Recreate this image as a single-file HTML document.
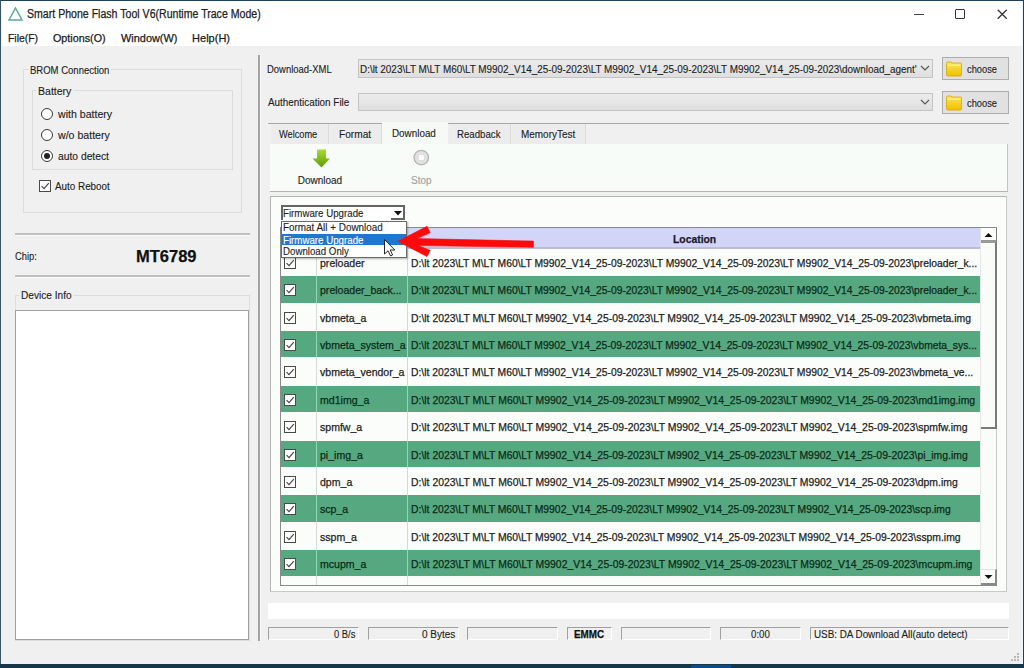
<!DOCTYPE html>
<html><head><meta charset="utf-8">
<style>
*{margin:0;padding:0;box-sizing:border-box}
html,body{width:1024px;height:668px;overflow:hidden;background:#f0f0f0}
body{position:relative;font-family:"Liberation Sans",sans-serif;font-size:12px;color:#1a1a1a}
.a{position:absolute}
.t{position:absolute;white-space:nowrap;transform-origin:0 0;-webkit-text-stroke:0.25px currentColor}
.gb{position:absolute;border:1px solid #dcdcdc}
.radio{position:absolute;width:12px;height:12px;border:1px solid #3a3a3a;border-radius:50%;background:#fff}
.radio .dot{position:absolute;left:2px;top:2px;width:6px;height:6px;border-radius:50%;background:#222}
.chk{position:absolute;width:12px;height:12px;border:1px solid #4a4a4a;background:#fff}
.chk svg{position:absolute;left:0;top:0}
.sep{position:absolute;height:3px;background:#c0c0c0;border-bottom:1px solid #fafafa}
.combo{position:absolute;background:linear-gradient(#ebebeb,#dfdfdf);border:1px solid #c4c4c4}
.btn{position:absolute;background:#e1e1e1;border:1px solid #adadad}
.folder{position:absolute;width:16px;height:13px;background:linear-gradient(#ffe866,#f2bc00);border-radius:1px}
.folder:before{content:"";position:absolute;left:0;top:-2px;width:7px;height:3px;background:#f7d040;border-radius:1px 1px 0 0}
.tab{position:absolute;background:#ececec;border-right:1px solid #dadada}
.sb{position:absolute;height:13px;border-top:1px solid #a0a0a0;border-left:1px solid #a0a0a0;border-bottom:1px solid #fff;border-right:1px solid #fff}
</style></head><body>


<div class="a" style="left:0;top:0;width:1024px;height:46px;background:#fff"></div>
<div class="a" style="left:0;top:0;width:1024px;height:1px;background:#1f4058"></div>
<div class="a" style="left:1px;top:1px;width:1px;height:663px;background:#e6f6fa"></div>
<div class="a" style="left:0;top:0;width:1px;height:668px;background:#345464"></div>
<div class="a" style="left:1022px;top:1px;width:1px;height:663px;background:#eef6fc"></div>
<div class="a" style="left:1023px;top:0;width:1px;height:668px;background:#2a3e52"></div>
<div class="a" style="left:0;top:664px;width:1024px;height:4px;background:#16364c"></div>
<div class="a" style="left:691px;top:665px;width:40px;height:3px;background:#0c4c88"></div>
<svg class="a" style="left:7px;top:6px" width="17" height="16" viewBox="0 0 17 16"><path d="M8.5 2 L15 14 L2 14 Z" fill="none" stroke="#5aa8a0" stroke-width="1.5" stroke-linejoin="miter"/></svg>
<span class="t" style="left:26.92px;top:8.00px;font-size:12px;line-height:12px;color:#222;transform:scaleX(0.8811);">Smart Phone Flash Tool V6(Runtime Trace Mode)</span>
<div class="a" style="left:914px;top:13.6px;width:10px;height:1.4px;background:#444"></div>
<div class="a" style="left:955px;top:9px;width:10px;height:9.5px;border:1.3px solid #333;border-radius:1px"></div>
<svg class="a" style="left:997px;top:8.5px" width="10.5" height="10.5" viewBox="0 0 10.5 10.5"><path d="M0.7 0.7 L9.8 9.8 M9.8 0.7 L0.7 9.8" stroke="#333" stroke-width="1.3"/></svg>
<span class="t" style="left:7.86px;top:33.00px;font-size:11px;line-height:11px;color:#1a1a1a;transform:scaleX(0.9433);">File(F)</span><span class="t" style="left:52.70px;top:33.00px;font-size:11px;line-height:11px;color:#1a1a1a;transform:scaleX(0.9778);">Options(O)</span><span class="t" style="left:120.70px;top:33.00px;font-size:11px;line-height:11px;color:#1a1a1a;transform:scaleX(0.9930);">Window(W)</span><span class="t" style="left:192.10px;top:33.00px;font-size:11px;line-height:11px;color:#1a1a1a;">Help(H)</span>

<div class="gb" style="left:23px;top:69px;width:219px;height:144px"></div>
<span class="t" style="left:29.75px;top:66.00px;font-size:10px;line-height:10px;color:#1e1e1e;-webkit-text-stroke:0.12px currentColor;transform:scaleX(0.9537);background:#f0f0f0;padding:0 2px;margin-left:-2px">BROM Connection</span>
<div class="gb" style="left:32px;top:90px;width:201px;height:80px"></div>
<span class="t" style="left:38.45px;top:87.00px;font-size:10px;line-height:10px;color:#1e1e1e;-webkit-text-stroke:0.12px currentColor;transform:scaleX(1.0484);background:#f0f0f0;padding:0 2px;margin-left:-2px">Battery</span>
<div class="radio" style="left:41px;top:107.5px"></div><span class="t" style="left:57.80px;top:110.00px;font-size:10px;line-height:10px;color:#1e1e1e;-webkit-text-stroke:0.12px currentColor;transform:scaleX(1.0588);">with battery</span>
<div class="radio" style="left:41px;top:128.6px"></div><span class="t" style="left:57.80px;top:131.00px;font-size:10px;line-height:10px;color:#1e1e1e;-webkit-text-stroke:0.12px currentColor;transform:scaleX(1.0592);">w/o battery</span>
<div class="radio" style="left:41px;top:149.5px"><div class="dot"></div></div><span class="t" style="left:57.80px;top:152.00px;font-size:10px;line-height:10px;color:#1e1e1e;-webkit-text-stroke:0.12px currentColor;transform:scaleX(1.0300);">auto detect</span>
<div class="chk" style="left:39px;top:179.5px"><svg width="10" height="10" viewBox="0 0 10 10"><path d="M1.6 5.2 L4 7.6 L8.8 2.2" fill="none" stroke="#444" stroke-width="1.15"/></svg></div><span class="t" style="left:54.90px;top:182.00px;font-size:10px;line-height:10px;color:#1e1e1e;-webkit-text-stroke:0.12px currentColor;transform:scaleX(0.9857);">Auto Reboot</span>

<div class="sep" style="left:15px;top:233px;width:235px"></div>
<span class="t" style="left:14.50px;top:252.00px;font-size:10px;line-height:10px;color:#1e1e1e;-webkit-text-stroke:0.12px currentColor;transform:scaleX(0.9348);">Chip:</span>
<span class="t" style="left:136.17px;top:249.00px;font-size:16px;line-height:16px;color:#111;font-weight:700;transform:scaleX(1.0316);">MT6789</span>
<div class="sep" style="left:15px;top:275px;width:235px"></div>
<div class="gb" style="left:15px;top:295px;width:235px;height:346px"></div>
<span class="t" style="left:21.39px;top:291.00px;font-size:10px;line-height:10px;color:#1e1e1e;-webkit-text-stroke:0.12px currentColor;transform:scaleX(1.0122);background:#f0f0f0;padding:0 2px;margin-left:-2px">Device Info</span>
<div class="a" style="left:15px;top:310px;width:234px;height:330px;background:#fff;border:1px solid #a0a0a0"></div>
<div class="a" style="left:258px;top:55px;width:3px;height:586px;background:#a4a4a4;border-right:1px solid #fafafa"></div>

<span class="t" style="left:266.95px;top:65.00px;font-size:10px;line-height:10px;color:#1e1e1e;-webkit-text-stroke:0.12px currentColor;transform:scaleX(0.9463);">Download-XML</span>
<span class="t" style="left:267.90px;top:98.00px;font-size:10px;line-height:10px;color:#1e1e1e;-webkit-text-stroke:0.12px currentColor;transform:scaleX(0.9878);">Authentication File</span>
<div class="combo" style="left:358px;top:59px;width:575px;height:19px"></div>
<span class="t" style="left:360.01px;top:65.00px;font-size:10px;line-height:10px;color:#1e1e1e;-webkit-text-stroke:0.12px currentColor;transform:scaleX(0.9902);">D:\lt 2023\LT M\LT M60\LT M9902_V14_25-09-2023\LT M9902_V14_25-09-2023\LT M9902_V14_25-09-2023\download_agent'</span>
<svg class="a" style="left:920px;top:65px" width="10" height="6" viewBox="0 0 10 6"><path d="M1 1 L5 5 L9 1" fill="none" stroke="#555" stroke-width="1.1"/></svg>
<div class="combo" style="left:358px;top:93px;width:575px;height:18px"></div>
<svg class="a" style="left:920px;top:99px" width="10" height="6" viewBox="0 0 10 6"><path d="M1 1 L5 5 L9 1" fill="none" stroke="#555" stroke-width="1.1"/></svg>
<div class="btn" style="left:942px;top:57px;width:67px;height:23px"></div>
<svg class="a" style="left:945px;top:61px" width="18" height="16" viewBox="0 0 18 16"><defs><linearGradient id="gf1" x1="0" y1="0" x2="0" y2="1"><stop offset="0" stop-color="#fde65a"/><stop offset="1" stop-color="#f0c000"/></linearGradient></defs><path d="M1.5 2.2 Q1.5 1 2.7 1 H6 L7 2 H15.3 Q16.5 2 16.5 3.2 V13.8 Q16.5 15 15.3 15 H2.7 Q1.5 15 1.5 13.8 Z" fill="url(#gf1)" stroke="#d8ac10" stroke-width="0.9"/><path d="M2.5 4.2 H15.5" stroke="#fff59a" stroke-width="1.2"/></svg>
<span class="t" style="left:966.60px;top:65.00px;font-size:10px;line-height:10px;color:#1e1e1e;-webkit-text-stroke:0.12px currentColor;transform:scaleX(0.9281);">choose</span>
<div class="btn" style="left:942px;top:91px;width:67px;height:23px"></div>
<svg class="a" style="left:945px;top:95px" width="18" height="16" viewBox="0 0 18 16"><defs><linearGradient id="gf2" x1="0" y1="0" x2="0" y2="1"><stop offset="0" stop-color="#fde65a"/><stop offset="1" stop-color="#f0c000"/></linearGradient></defs><path d="M1.5 2.2 Q1.5 1 2.7 1 H6 L7 2 H15.3 Q16.5 2 16.5 3.2 V13.8 Q16.5 15 15.3 15 H2.7 Q1.5 15 1.5 13.8 Z" fill="url(#gf2)" stroke="#d8ac10" stroke-width="0.9"/><path d="M2.5 4.2 H15.5" stroke="#fff59a" stroke-width="1.2"/></svg>
<span class="t" style="left:966.60px;top:99.00px;font-size:10px;line-height:10px;color:#1e1e1e;-webkit-text-stroke:0.12px currentColor;transform:scaleX(0.9281);">choose</span>

<div class="a" style="left:268px;top:123px;width:741px;height:1px;background:#a8a8a8"></div>
<div class="tab" style="left:271px;top:124px;width:58px;height:20px"></div>
<span class="t" style="left:279.00px;top:130.00px;font-size:10px;line-height:10px;color:#1e1e1e;-webkit-text-stroke:0.12px currentColor;transform:scaleX(0.9214);">Welcome</span>
<div class="tab" style="left:330px;top:124px;width:52px;height:20px"></div>
<span class="t" style="left:338.78px;top:130.00px;font-size:10px;line-height:10px;color:#1e1e1e;-webkit-text-stroke:0.12px currentColor;transform:scaleX(1.0161);">Format</span>
<div class="a" style="left:382px;top:122px;width:66px;height:23px;background:#f6faf6"></div>
<span class="t" style="left:391.81px;top:129.00px;font-size:10px;line-height:10px;color:#1e1e1e;-webkit-text-stroke:0.12px currentColor;transform:scaleX(0.9860);">Download</span>
<div class="tab" style="left:449px;top:124px;width:62px;height:20px"></div>
<span class="t" style="left:456.83px;top:130.00px;font-size:10px;line-height:10px;color:#1e1e1e;-webkit-text-stroke:0.12px currentColor;transform:scaleX(0.9659);">Readback</span>
<div class="tab" style="left:512px;top:124px;width:74px;height:20px"></div>
<span class="t" style="left:521.41px;top:130.00px;font-size:10px;line-height:10px;color:#1e1e1e;-webkit-text-stroke:0.12px currentColor;transform:scaleX(0.9944);">MemoryTest</span>
<div class="a" style="left:270px;top:144px;width:738px;height:48px;background:#f8fcf8;border-right:1px solid #c4c4c4;border-bottom:1px solid #b4b4b4"></div>
<div class="a" style="left:270px;top:192px;width:738px;height:4px;background:#eef2ee"></div>
<svg class="a" style="left:311px;top:148px" width="20" height="21" viewBox="0 0 20 21">
<defs><linearGradient id="ga" x1="0" y1="0" x2="0" y2="1"><stop offset="0" stop-color="#a8dc30"/><stop offset="1" stop-color="#5e9c08"/></linearGradient></defs>
<path d="M6 1.5 H15 V10.5 H19 L10.5 19.5 L1.5 10.5 H6 Z" fill="url(#ga)"/></svg>
<span class="t" style="left:297.70px;top:176.00px;font-size:10px;line-height:10px;color:#1e1e1e;-webkit-text-stroke:0.12px currentColor;">Download</span>
<svg class="a" style="left:412px;top:148px" width="19" height="19" viewBox="0 0 19 19">
<circle cx="9.3" cy="10.2" r="7.4" fill="#d8dad8" opacity="0.5"/><circle cx="9.3" cy="9.5" r="7.2" fill="#e2e2e2" stroke="#b4b4b4" stroke-width="1.3"/><rect x="6.3" y="6.5" width="6" height="6" rx="1" fill="#fcfcfc" stroke="#d0d0d0" stroke-width="0.6"/></svg>
<span class="t" style="left:411.00px;top:176.00px;font-size:10px;line-height:10px;color:#a0a0a0;-webkit-text-stroke:0.12px currentColor;">Stop</span>

<div class="a" style="left:270px;top:196px;width:737px;height:396px;background:#fbfdfb;border:1px solid #b4b4b4;border-right-color:#c8c8c8;border-bottom-color:#c8c8c8"></div>
<div class="a" style="left:280px;top:227px;width:717px;height:359px;background:#fafdfa;border-left:1px solid #8a8a8a;border-top:1px solid #8a8a8a;border-bottom:1px solid #8a8a8a"></div>
<div class="a" style="left:281px;top:228px;width:699px;height:20px;background:#d3d5f8"></div>
<div class="a" style="left:281px;top:247px;width:699px;height:1.5px;background:#bcbcd8"></div>
<span class="t" style="left:672.90px;top:234.00px;font-size:11px;line-height:11px;color:#1a1a2a;font-weight:700;transform:scaleX(0.9422);">Location</span>
<div class="a" style="left:316px;top:248px;width:1px;height:337px;background:#d6dad6"></div>
<div class="a" style="left:407px;top:248px;width:1px;height:337px;background:#d6dad6"></div>

<div class="chk" style="left:284px;top:256.80px"><svg width="10" height="10" viewBox="0 0 10 10"><path d="M1.6 5.2 L4 7.6 L8.8 2.2" fill="none" stroke="#444" stroke-width="1.15"/></svg></div>
<span class="t" style="left:319.70px;top:258.00px;font-size:11px;line-height:11px;color:#222;transform:scaleX(0.9595);">preloader</span>
<span class="t" style="left:410.96px;top:258.00px;font-size:11px;line-height:11px;color:#222;transform:scaleX(0.9394);">D:\lt 2023\LT M\LT M60\LT M9902_V14_25-09-2023\LT M9902_V14_25-09-2023\LT M9902_V14_25-09-2023\preloader_k...</span>
<div class="a" style="left:281px;top:276.19px;width:699px;height:26.4px;background:#56a880"></div>
<div class="a" style="left:316px;top:276.19px;width:1px;height:26.4px;background:#92d6b2"></div>
<div class="a" style="left:407px;top:276.19px;width:1px;height:26.4px;background:#92d6b2"></div>
<div class="chk" style="left:284px;top:284.19px"><svg width="10" height="10" viewBox="0 0 10 10"><path d="M1.6 5.2 L4 7.6 L8.8 2.2" fill="none" stroke="#444" stroke-width="1.15"/></svg></div>
<span class="t" style="left:319.70px;top:285.00px;font-size:11px;line-height:11px;color:#0c2a18;transform:scaleX(0.9595);">preloader_back...</span>
<span class="t" style="left:410.96px;top:285.00px;font-size:11px;line-height:11px;color:#0c2a18;transform:scaleX(0.9394);">D:\lt 2023\LT M\LT M60\LT M9902_V14_25-09-2023\LT M9902_V14_25-09-2023\LT M9902_V14_25-09-2023\preloader_k...</span>
<div class="chk" style="left:284px;top:311.58px"><svg width="10" height="10" viewBox="0 0 10 10"><path d="M1.6 5.2 L4 7.6 L8.8 2.2" fill="none" stroke="#444" stroke-width="1.15"/></svg></div>
<span class="t" style="left:319.70px;top:313.00px;font-size:11px;line-height:11px;color:#222;transform:scaleX(0.9595);">vbmeta_a</span>
<span class="t" style="left:410.95px;top:313.00px;font-size:11px;line-height:11px;color:#222;transform:scaleX(0.9453);">D:\lt 2023\LT M\LT M60\LT M9902_V14_25-09-2023\LT M9902_V14_25-09-2023\LT M9902_V14_25-09-2023\vbmeta.img</span>
<div class="a" style="left:281px;top:330.97px;width:699px;height:26.4px;background:#56a880"></div>
<div class="a" style="left:316px;top:330.97px;width:1px;height:26.4px;background:#92d6b2"></div>
<div class="a" style="left:407px;top:330.97px;width:1px;height:26.4px;background:#92d6b2"></div>
<div class="chk" style="left:284px;top:338.97px"><svg width="10" height="10" viewBox="0 0 10 10"><path d="M1.6 5.2 L4 7.6 L8.8 2.2" fill="none" stroke="#444" stroke-width="1.15"/></svg></div>
<span class="t" style="left:319.70px;top:340.00px;font-size:11px;line-height:11px;color:#0c2a18;transform:scaleX(0.9595);">vbmeta_system_a</span>
<span class="t" style="left:410.96px;top:340.00px;font-size:11px;line-height:11px;color:#0c2a18;transform:scaleX(0.9379);">D:\lt 2023\LT M\LT M60\LT M9902_V14_25-09-2023\LT M9902_V14_25-09-2023\LT M9902_V14_25-09-2023\vbmeta_sys...</span>
<div class="chk" style="left:284px;top:366.36px"><svg width="10" height="10" viewBox="0 0 10 10"><path d="M1.6 5.2 L4 7.6 L8.8 2.2" fill="none" stroke="#444" stroke-width="1.15"/></svg></div>
<span class="t" style="left:319.70px;top:367.00px;font-size:11px;line-height:11px;color:#222;transform:scaleX(0.9595);">vbmeta_vendor_a</span>
<span class="t" style="left:410.96px;top:367.00px;font-size:11px;line-height:11px;color:#222;transform:scaleX(0.9394);">D:\lt 2023\LT M\LT M60\LT M9902_V14_25-09-2023\LT M9902_V14_25-09-2023\LT M9902_V14_25-09-2023\vbmeta_ve...</span>
<div class="a" style="left:281px;top:385.75px;width:699px;height:26.4px;background:#56a880"></div>
<div class="a" style="left:316px;top:385.75px;width:1px;height:26.4px;background:#92d6b2"></div>
<div class="a" style="left:407px;top:385.75px;width:1px;height:26.4px;background:#92d6b2"></div>
<div class="chk" style="left:284px;top:393.75px"><svg width="10" height="10" viewBox="0 0 10 10"><path d="M1.6 5.2 L4 7.6 L8.8 2.2" fill="none" stroke="#444" stroke-width="1.15"/></svg></div>
<span class="t" style="left:319.70px;top:395.00px;font-size:11px;line-height:11px;color:#0c2a18;transform:scaleX(0.9595);">md1img_a</span>
<span class="t" style="left:410.95px;top:395.00px;font-size:11px;line-height:11px;color:#0c2a18;transform:scaleX(0.9475);">D:\lt 2023\LT M\LT M60\LT M9902_V14_25-09-2023\LT M9902_V14_25-09-2023\LT M9902_V14_25-09-2023\md1img.img</span>
<div class="chk" style="left:284px;top:421.14px"><svg width="10" height="10" viewBox="0 0 10 10"><path d="M1.6 5.2 L4 7.6 L8.8 2.2" fill="none" stroke="#444" stroke-width="1.15"/></svg></div>
<span class="t" style="left:319.70px;top:422.00px;font-size:11px;line-height:11px;color:#222;transform:scaleX(0.9595);">spmfw_a</span>
<span class="t" style="left:410.95px;top:422.00px;font-size:11px;line-height:11px;color:#222;transform:scaleX(0.9473);">D:\lt 2023\LT M\LT M60\LT M9902_V14_25-09-2023\LT M9902_V14_25-09-2023\LT M9902_V14_25-09-2023\spmfw.img</span>
<div class="a" style="left:281px;top:440.53px;width:699px;height:26.4px;background:#56a880"></div>
<div class="a" style="left:316px;top:440.53px;width:1px;height:26.4px;background:#92d6b2"></div>
<div class="a" style="left:407px;top:440.53px;width:1px;height:26.4px;background:#92d6b2"></div>
<div class="chk" style="left:284px;top:448.53px"><svg width="10" height="10" viewBox="0 0 10 10"><path d="M1.6 5.2 L4 7.6 L8.8 2.2" fill="none" stroke="#444" stroke-width="1.15"/></svg></div>
<span class="t" style="left:319.70px;top:450.00px;font-size:11px;line-height:11px;color:#0c2a18;transform:scaleX(0.9595);">pi_img_a</span>
<span class="t" style="left:410.95px;top:450.00px;font-size:11px;line-height:11px;color:#0c2a18;transform:scaleX(0.9457);">D:\lt 2023\LT M\LT M60\LT M9902_V14_25-09-2023\LT M9902_V14_25-09-2023\LT M9902_V14_25-09-2023\pi_img.img</span>
<div class="chk" style="left:284px;top:475.92px"><svg width="10" height="10" viewBox="0 0 10 10"><path d="M1.6 5.2 L4 7.6 L8.8 2.2" fill="none" stroke="#444" stroke-width="1.15"/></svg></div>
<span class="t" style="left:319.70px;top:477.00px;font-size:11px;line-height:11px;color:#222;transform:scaleX(0.9595);">dpm_a</span>
<span class="t" style="left:410.95px;top:477.00px;font-size:11px;line-height:11px;color:#222;transform:scaleX(0.9464);">D:\lt 2023\LT M\LT M60\LT M9902_V14_25-09-2023\LT M9902_V14_25-09-2023\LT M9902_V14_25-09-2023\dpm.img</span>
<div class="a" style="left:281px;top:495.31px;width:699px;height:26.4px;background:#56a880"></div>
<div class="a" style="left:316px;top:495.31px;width:1px;height:26.4px;background:#92d6b2"></div>
<div class="a" style="left:407px;top:495.31px;width:1px;height:26.4px;background:#92d6b2"></div>
<div class="chk" style="left:284px;top:503.31px"><svg width="10" height="10" viewBox="0 0 10 10"><path d="M1.6 5.2 L4 7.6 L8.8 2.2" fill="none" stroke="#444" stroke-width="1.15"/></svg></div>
<span class="t" style="left:319.70px;top:504.00px;font-size:11px;line-height:11px;color:#0c2a18;transform:scaleX(0.9595);">scp_a</span>
<span class="t" style="left:410.96px;top:504.00px;font-size:11px;line-height:11px;color:#0c2a18;transform:scaleX(0.9413);">D:\lt 2023\LT M\LT M60\LT M9902_V14_25-09-2023\LT M9902_V14_25-09-2023\LT M9902_V14_25-09-2023\scp.img</span>
<div class="chk" style="left:284px;top:530.70px"><svg width="10" height="10" viewBox="0 0 10 10"><path d="M1.6 5.2 L4 7.6 L8.8 2.2" fill="none" stroke="#444" stroke-width="1.15"/></svg></div>
<span class="t" style="left:319.70px;top:532.00px;font-size:11px;line-height:11px;color:#222;transform:scaleX(0.9595);">sspm_a</span>
<span class="t" style="left:410.96px;top:532.00px;font-size:11px;line-height:11px;color:#222;transform:scaleX(0.9434);">D:\lt 2023\LT M\LT M60\LT M9902_V14_25-09-2023\LT M9902_V14_25-09-2023\LT M9902_V14_25-09-2023\sspm.img</span>
<div class="a" style="left:281px;top:550.09px;width:699px;height:26.4px;background:#56a880"></div>
<div class="a" style="left:316px;top:550.09px;width:1px;height:26.4px;background:#92d6b2"></div>
<div class="a" style="left:407px;top:550.09px;width:1px;height:26.4px;background:#92d6b2"></div>
<div class="chk" style="left:284px;top:558.09px"><svg width="10" height="10" viewBox="0 0 10 10"><path d="M1.6 5.2 L4 7.6 L8.8 2.2" fill="none" stroke="#444" stroke-width="1.15"/></svg></div>
<span class="t" style="left:319.70px;top:559.00px;font-size:11px;line-height:11px;color:#0c2a18;transform:scaleX(0.9595);">mcupm_a</span>
<span class="t" style="left:410.95px;top:559.00px;font-size:11px;line-height:11px;color:#0c2a18;transform:scaleX(0.9477);">D:\lt 2023\LT M\LT M60\LT M9902_V14_25-09-2023\LT M9902_V14_25-09-2023\LT M9902_V14_25-09-2023\mcupm.img</span>


<div class="a" style="left:980px;top:228px;width:17px;height:357px;background:#f9fcf9;border-left:1px solid #e4e8e4;border-right:1px solid #c8c8c8"></div>
<div class="a" style="left:995px;top:228px;width:2px;height:201px;background:#7a7a7a"></div>
<div class="a" style="left:981px;top:228px;width:15px;height:15px;background:#fdfdfd;border-bottom:3px solid #999"></div>
<svg class="a" style="left:984px;top:232px" width="9" height="6" viewBox="0 0 9 6"><path d="M0.5 5 L4.5 1 L8.5 5 Z" fill="#111"/></svg>
<div class="a" style="left:981px;top:427px;width:16px;height:2px;background:#7a7a7a"></div>
<div class="a" style="left:981px;top:569px;width:16px;height:16px;background:#fdfdfd;border-right:2px solid #888;border-bottom:2px solid #888;border-top:1px solid #e0e0e0"></div>
<svg class="a" style="left:984px;top:574px" width="9" height="6" viewBox="0 0 9 6"><path d="M0.5 1 L4.5 5 L8.5 1 Z" fill="#111"/></svg>

<div class="a" style="left:281px;top:204.5px;width:124px;height:15px;background:#fff;border:2px solid #646464;border-bottom:none"></div>
<span class="t" style="left:282.53px;top:209.00px;font-size:10px;line-height:10px;color:#1e1e1e;-webkit-text-stroke:0.12px currentColor;transform:scaleX(0.9720);">Firmware Upgrade</span>
<svg class="a" style="left:393.5px;top:211px" width="8" height="5" viewBox="0 0 8 5"><path d="M0 0 L8 0 L4 4.5 Z" fill="#111"/></svg>
<div class="a" style="left:391px;top:218px;width:14px;height:2px;background:#646464"></div>
<div class="a" style="left:280.5px;top:221px;width:126px;height:37px;background:#fff;border:1px solid #6a6a6a;box-shadow:1px 1px 2px rgba(0,0,0,0.3)"></div>
<div class="a" style="left:281.5px;top:234px;width:124px;height:11px;background:#1f78d0"></div>
<span class="t" style="left:282.51px;top:223.00px;font-size:10px;line-height:10px;color:#1e1e1e;-webkit-text-stroke:0.12px currentColor;transform:scaleX(0.9890);">Format All + Download</span>
<span class="t" style="left:282.53px;top:236.00px;font-size:10px;line-height:10px;color:#ffffff;-webkit-text-stroke:0.12px currentColor;transform:scaleX(0.9720);">Firmware Upgrade</span>
<span class="t" style="left:282.53px;top:247.00px;font-size:10px;line-height:10px;color:#1e1e1e;-webkit-text-stroke:0.12px currentColor;transform:scaleX(0.9701);">Download Only</span>

<div class="a" style="left:268px;top:602.5px;width:741px;height:16px;background:#fff"></div>
<div class="sb" style="left:268px;top:627px;width:91px"></div><span class="t" style="left:333.90px;top:630.00px;font-size:10px;line-height:10px;color:#1e1e1e;-webkit-text-stroke:0.12px currentColor;transform:scaleX(0.9348);">0 B/s</span>
<div class="sb" style="left:368px;top:627px;width:91px"></div><span class="t" style="left:421.80px;top:630.00px;font-size:10px;line-height:10px;color:#1e1e1e;-webkit-text-stroke:0.12px currentColor;transform:scaleX(0.9970);">0 Bytes</span>
<div class="sb" style="left:467px;top:627px;width:91px"></div>
<div class="sb" style="left:567px;top:627px;width:45px"></div><span class="t" style="left:574.40px;top:630.00px;font-size:10px;line-height:10px;color:#111;font-weight:700;transform:scaleX(0.9867);">EMMC</span>
<div class="sb" style="left:621px;top:627px;width:90px"></div>
<div class="sb" style="left:720px;top:627px;width:81px"></div><span class="t" style="left:750.60px;top:630.00px;font-size:10px;line-height:10px;color:#1e1e1e;-webkit-text-stroke:0.12px currentColor;transform:scaleX(0.9700);">0:00</span>
<div class="sb" style="left:810px;top:627px;width:199px"></div><span class="t" style="left:814.00px;top:630.00px;font-size:10px;line-height:10px;color:#1e1e1e;-webkit-text-stroke:0.12px currentColor;transform:scaleX(0.9833);">USB: DA Download All(auto detect)</span>

<svg class="a" style="left:1008px;top:652px" width="12" height="12" viewBox="0 0 12 12"><g fill="#b8b8b8"><rect x="9" y="1" width="2" height="2"/><rect x="6" y="4" width="2" height="2"/><rect x="9" y="4" width="2" height="2"/><rect x="3" y="7" width="2" height="2"/><rect x="6" y="7" width="2" height="2"/><rect x="9" y="7" width="2" height="2"/></g></svg>


<svg class="a" style="left:0;top:0" width="1024" height="668" viewBox="0 0 1024 668">
<path d="M397.8 241.3 L427 226.3 L430.2 232.8 L417 238.6 L533.5 241.1 L533.5 247.3 L418 245.6 L430.2 250.3 L427 256.6 Z" fill="#fe0a0a" stroke="#fe0a0a" stroke-width="0.6" stroke-linejoin="round"/>
<path d="M384.5 239.5 L384.5 254 L388 250.8 L390.6 256 L392.6 255 L390.2 250 L394.8 250 Z" fill="#fff" stroke="#111" stroke-width="0.9" stroke-linejoin="round"/>
</svg>

</body></html>
